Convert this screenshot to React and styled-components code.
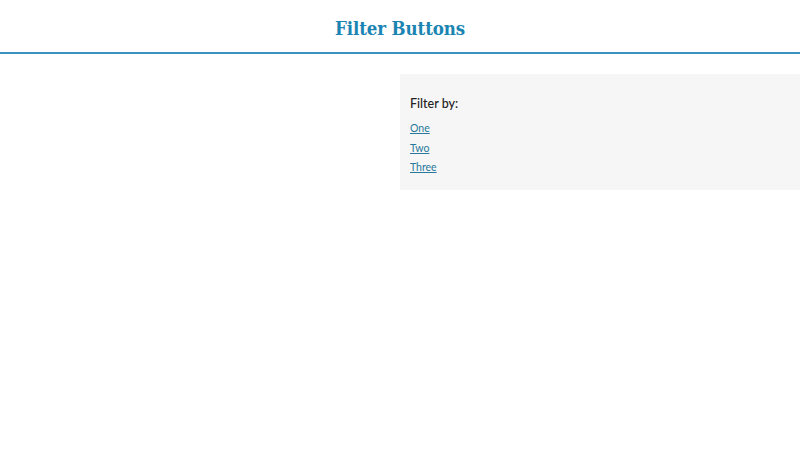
import React from "react";
import styled, { createGlobalStyle } from "styled-components";

const Global = createGlobalStyle`
  html, body { margin: 0; padding: 0; background: #fff; }
  body { font-family: Lato, "Noto Sans", sans-serif; }
`;

const Header = styled.header`
  height: 52px;
  border-bottom: 2px solid #3a93be;
  display: flex;
  align-items: center;
  justify-content: center;
`;

const Title = styled.h1`
  margin: 0;
  font-family: "DejaVu Serif", "Liberation Serif", serif;
  font-stretch: condensed;
  font-weight: bold;
  font-size: 18.5px;
  color: #1a84b2;
  letter-spacing: -0.1px;
  padding-top: 5px;
`;

const Main = styled.main`
  display: grid;
  grid-template-columns: 1fr 1fr;
  margin-top: 20px;
`;

const Panel = styled.aside`
  grid-column: 2;
  background: #f6f6f6;
  padding: 21px 10px 0;
  height: 116px;
  box-sizing: border-box;
`;

const Heading = styled.h2`
  margin: 0 0 7px;
  font-size: 12.5px;
  font-weight: 500;
  color: #222;
  line-height: 17px;
`;

const List = styled.ul`
  list-style: none;
  margin: 0;
  padding: 0;
`;

const Item = styled.li`
  line-height: 19.5px;
  font-size: 10.5px;
`;

const Link = styled.a`
  font-size: 10.5px;
  color: #27789c;
  text-decoration: underline;
`;

export default function App() {
  return (
    <>
      <Global />
      <Header>
        <Title>Filter Buttons</Title>
      </Header>
      <Main>
        <Panel>
          <Heading>Filter by:</Heading>
          <List>
            {["One", "Two", "Three"].map((t) => (
              <Item key={t}>
                <Link href="#">{t}</Link>
              </Item>
            ))}
          </List>
        </Panel>
      </Main>
    </>
  );
}
